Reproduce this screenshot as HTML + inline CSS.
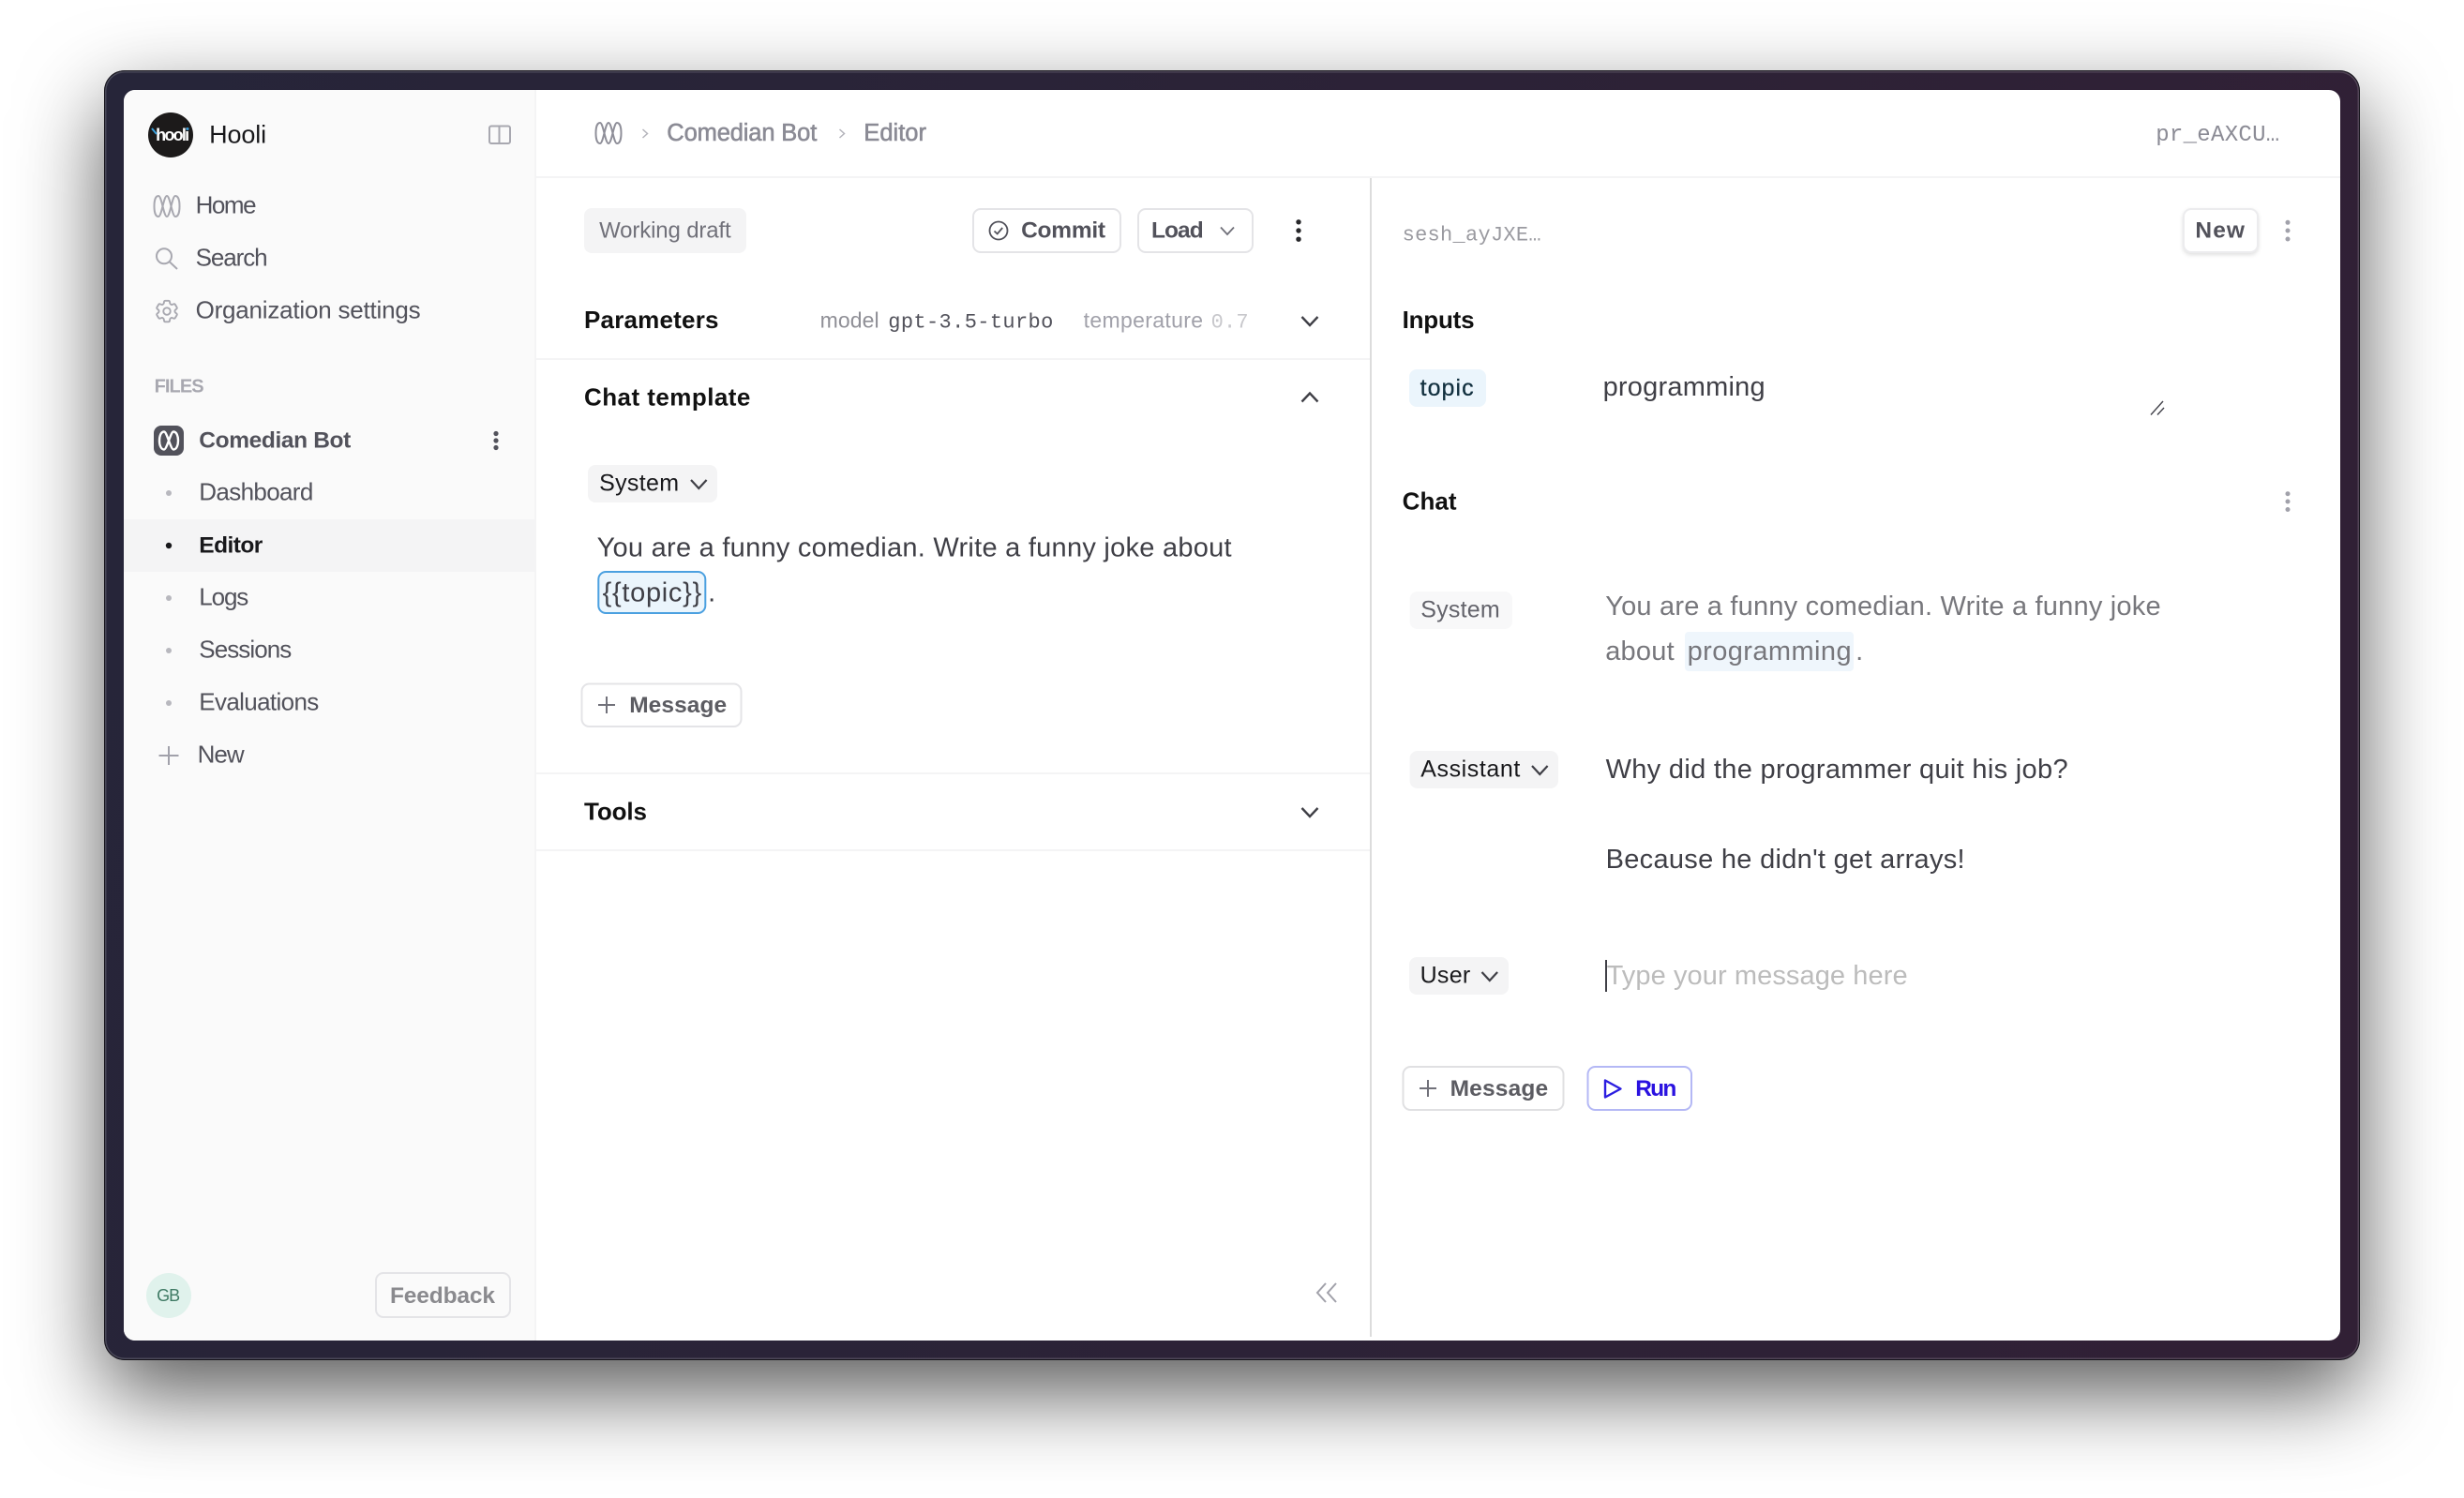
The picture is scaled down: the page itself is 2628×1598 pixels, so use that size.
<!DOCTYPE html>
<html lang="en">
<head>
<meta charset="utf-8">
<title>Hooli - Comedian Bot Editor</title>
<style>
html,body{margin:0;padding:0;background:#fff;width:2628px;height:1598px;overflow:hidden}
#win{position:absolute;left:111px;top:75px;width:2406px;height:1376px;border-radius:22px;box-sizing:border-box;
background:linear-gradient(100deg,#262539,#312035);
box-shadow:0 35px 90px 0 rgba(0,0,0,.65),inset 0 0 0 1px #14121a,inset 0 0 0 2.5px rgba(255,255,255,.16)}
#inner{position:absolute;left:132px;top:96px;width:2364px;height:1334px;border-radius:12px;background:#fff;overflow:hidden}
#side{position:absolute;left:0;top:0;width:438px;height:1334px;background:#fafafa;border-right:2px solid #f4f4f5}
#active{position:absolute;left:0;top:458px;width:438px;height:56px;background:#f4f4f5}
svg{position:absolute;left:0;top:0}
text{font-family:"Liberation Sans",sans-serif;font-size:26px;transform:translateX(-.4px)}
.mono{font-family:"Liberation Mono",monospace}
.b{font-weight:700;font-size:24.5px}
</style>
</head>
<body>
<div id="win"></div>
<div id="inner"><div id="side"></div><div id="active"></div></div>
<svg width="2628" height="1598" viewBox="0 0 2628 1598" xmlns="http://www.w3.org/2000/svg">
<!-- dividers -->
<g fill="#f4f4f5">
<rect x="572" y="188" width="1924" height="2"/>
<rect x="572" y="382" width="889" height="2"/>
<rect x="572" y="824" width="889" height="2"/>
<rect x="572" y="906" width="889" height="2"/>
</g>
<rect x="1461" y="190" width="2" height="1236" fill="#dcdcdc"/>

<!-- sidebar header -->
<circle cx="182" cy="144" r="24" fill="#1c1a1a"/>
<text class="b" x="166.5" y="150" fill="#fff" textLength="36" style="font-size:18px">hooli</text>
<path d="M162 137l5 6" stroke="#3aa0dc" stroke-width="2" fill="none"/>
<circle cx="200" cy="137.5" r="1.5" fill="#3aa0dc"/>
<text x="223.5" y="152.5" fill="#18181b" textLength="61" style="font-size:27px">Hooli</text>
<g fill="none" stroke="#a8a8b0" stroke-width="2">
<rect x="522" y="134.5" width="22" height="18.5" rx="2"/>
<path d="M532.5 134.5v18.5"/>
</g>

<!-- sidebar nav -->
<g fill="none" stroke="#a8a8b0" stroke-width="2">
<path d="M169 209C165.5 209 164.5 215 164.5 220S165.5 231 169 231C172.5 231 174.5 209 178 209C181.5 209 183.5 231 187 231C190.5 231 191.5 225 191.5 220S190.5 209 187 209C183.5 209 181.5 231 178 231C174.5 231 172.5 209 169 209Z"/>
<circle cx="175" cy="273.3" r="8"/>
<path d="M181 279.5l8 7.5"/>
<g transform="translate(163 317) scale(1.25)" stroke-width="1.5">
<path d="M9.594 3.94c.09-.542.56-.94 1.11-.94h2.593c.55 0 1.02.398 1.11.94l.213 1.281c.063.374.313.686.645.87.074.04.147.083.22.127.325.196.72.257 1.075.124l1.217-.456a1.125 1.125 0 011.37.49l1.296 2.247a1.125 1.125 0 01-.26 1.431l-1.003.827c-.293.241-.438.613-.43.992a7.723 7.723 0 010 .255c-.008.378.137.75.43.991l1.004.827c.424.35.534.955.26 1.43l-1.298 2.247a1.125 1.125 0 01-1.369.491l-1.217-.456c-.355-.133-.75-.072-1.076.124a6.47 6.47 0 01-.22.128c-.331.183-.581.495-.644.869l-.213 1.281c-.09.543-.56.94-1.11.94h-2.594c-.55 0-1.019-.398-1.11-.94l-.213-1.281c-.062-.374-.312-.686-.644-.87a6.52 6.52 0 01-.22-.127c-.325-.196-.72-.257-1.076-.124l-1.217.456a1.125 1.125 0 01-1.369-.49l-1.297-2.247a1.125 1.125 0 01.26-1.431l1.004-.827c.292-.24.437-.613.43-.991a6.932 6.932 0 010-.255c.007-.38-.138-.751-.43-.992l-1.004-.827a1.125 1.125 0 01-.26-1.43l1.297-2.247a1.125 1.125 0 011.37-.491l1.216.456c.356.133.751.072 1.076-.124.072-.044.146-.086.22-.128.332-.183.582-.495.644-.869l.214-1.28z"/>
<circle cx="12" cy="12" r="3"/>
</g>
</g>
<g fill="#52525b">
<text x="209" y="227.5" textLength="65">Home</text>
<text x="209" y="283.5" textLength="77">Search</text>
<text x="209" y="339.5" textLength="240">Organization settings</text>
<text x="212.7" y="533.7" textLength="122">Dashboard</text>
<text x="212.7" y="645.7" textLength="53">Logs</text>
<text x="212.7" y="701.7" textLength="99">Sessions</text>
<text x="212.7" y="757.7" textLength="128">Evaluations</text>
<text x="211" y="813.7" textLength="50">New</text>
</g>
<text class="b" x="165" y="418.7" fill="#a8a8b0" textLength="53" style="font-size:20px">FILES</text>

<rect x="164" y="454" width="32" height="32" rx="8" fill="#52525b"/>
<path d="M175 460.5C171.5 460.5 170 465.5 170 470S171.5 479.5 175 479.5C178 479.5 182 460.5 185 460.5C188.5 460.5 190 465.5 190 470S188.5 479.5 185 479.5C182 479.5 178 460.5 175 460.5Z" fill="none" stroke="#fff" stroke-width="2.4"/>
<text class="b" x="212.7" y="477.7" fill="#52525b" textLength="162">Comedian Bot</text>
<g fill="#52525b"><circle cx="529" cy="462.5" r="2.6"/><circle cx="529" cy="470" r="2.6"/><circle cx="529" cy="477.5" r="2.6"/></g>
<g fill="#b8b8be"><circle cx="180" cy="526" r="3"/><circle cx="180" cy="638" r="3"/><circle cx="180" cy="694" r="3"/><circle cx="180" cy="750" r="3"/></g>
<circle cx="180" cy="582" r="3.2" fill="#18181b"/>
<text class="b" x="212.7" y="589.7" fill="#18181b" textLength="68">Editor</text>
<path d="M169.5 806h21M180 796v20" stroke="#a1a1aa" stroke-width="2" fill="none"/>

<!-- sidebar footer -->
<circle cx="180" cy="1382" r="24" fill="#e0f2ec"/>
<text x="167.5" y="1388" fill="#3f7a64" textLength="25" style="font-size:18px">GB</text>
<rect x="401" y="1358" width="143" height="47" rx="8" fill="#fafafa" stroke="#e4e4e7" stroke-width="2"/>
<text class="b" x="416.4" y="1390" fill="#8a8a8e" textLength="112">Feedback</text>

<!-- breadcrumb -->
<path d="M640 131C636.5 131 635.5 137 635.5 142S636.5 153 640 153C643.5 153 645.5 131 649 131C652.5 131 654.5 153 658 153C661.5 153 662.5 147 662.5 142S661.5 131 658 131C654.5 131 652.5 153 649 153C645.5 153 643.5 131 640 131Z" fill="none" stroke="#8f8f99" stroke-width="2"/>
<g fill="none" stroke="#b4b4bb" stroke-width="1.5">
<path d="M685.5 138l5 4.5-5 4.5"/>
<path d="M895.5 138l5 4.5-5 4.5"/>
</g>
<g fill="#8b8b95" stroke="#8b8b95" stroke-width=".6" style="font-size:25px">
<text x="711.7" y="150" textLength="160" style="font-size:25.5px">Comedian Bot</text>
<text x="921.7" y="150" textLength="66.7" style="font-size:25.5px">Editor</text>
</g>
<text class="mono" x="2299.6" y="150" fill="#8b8b95" textLength="132" style="font-size:24px">pr_eAXCU…</text>

<!-- left panel toolbar -->
<rect x="623" y="222" width="173" height="48" rx="8" fill="#f4f4f5"/>
<text x="639.5" y="253.3" fill="#71717a" textLength="140.6" style="font-size:24px">Working draft</text>
<rect x="1038" y="223" width="157" height="46" rx="8" fill="#fff" stroke="#e4e4e7" stroke-width="2"/>
<g fill="none" stroke="#52525b" stroke-width="1.8">
<circle cx="1065" cy="246" r="9.5"/>
<path d="M1060.5 246.5l3.2 3 5.5-6.5"/>
</g>
<text class="b" x="1089.5" y="253.5" fill="#52525b" textLength="90">Commit</text>
<rect x="1214" y="223" width="122" height="46" rx="8" fill="#fff" stroke="#e4e4e7" stroke-width="2"/>
<text class="b" x="1228.4" y="253.5" fill="#52525b" textLength="55.7">Load</text>
<path d="M1302 242.5l7 7.5 7-7.5" fill="none" stroke="#71717a" stroke-width="1.8"/>
<g fill="#27272a"><circle cx="1385" cy="236.8" r="2.7"/><circle cx="1385" cy="246" r="2.7"/><circle cx="1385" cy="255.2" r="2.7"/></g>

<!-- parameters -->
<g fill="#111" font-weight="700">
<text x="623.4" y="350" textLength="143.5" style="font-size:26px">Parameters</text>
<text x="623.4" y="432.7" textLength="177.4" style="font-size:26px">Chat template</text>
<text x="623.4" y="874.3" textLength="67" style="font-size:26px">Tools</text>
</g>
<text x="875" y="349.3" fill="#8f8f96" textLength="63" style="font-size:23px">model</text>
<text class="mono" x="947.7" y="349.3" fill="#52525b" textLength="176" style="font-size:22px">gpt-3.5-turbo</text>
<text x="1156" y="349.3" fill="#a1a1aa" textLength="127.5" style="font-size:23px">temperature</text>
<text class="mono" x="1292" y="349.3" fill="#c8c8cc" textLength="40" style="font-size:22px">0.7</text>
<g fill="none" stroke="#3f3f46" stroke-width="2.4">
<path d="M1388.5 338l8.5 9 8.5-9"/>
<path d="M1388.5 428.5l8.5-9 8.5 9"/>
<path d="M1388.5 862l8.5 9 8.5-9"/>
</g>

<!-- chat template -->
<rect x="627" y="496" width="138" height="40" rx="8" fill="#f4f4f5"/>
<text x="639.5" y="523.3" fill="#18181b" textLength="85" style="font-size:25px">System</text>
<path d="M737 512l8.3 9 8.3-9" fill="none" stroke="#3f3f46" stroke-width="2.2"/>
<text x="637" y="593.3" fill="#3f3f46" textLength="677" style="font-size:29px">You are a funny comedian. Write a funny joke about</text>
<rect x="638.3" y="610" width="114" height="44" rx="8" fill="#ebf5fc" stroke="#4ba0e0" stroke-width="2"/>
<text x="643" y="641.7" fill="#3f3f46" textLength="105.6" style="font-size:29px">{{topic}}</text>
<text x="755.5" y="641.7" fill="#3f3f46" style="font-size:29px">.</text>
<rect x="620.5" y="729.5" width="170" height="45.5" rx="8" fill="#fff" stroke="#e4e4e7" stroke-width="2"/>
<path d="M638 752h18M647 743v18" stroke="#71717a" stroke-width="2" fill="none"/>
<text class="b" x="671.6" y="760" fill="#5c5c62" textLength="104">Message</text>

<!-- collapse -->
<path d="M1414 1369l-9 10 9 10M1425 1369l-9 10 9 10" fill="none" stroke="#a1a1aa" stroke-width="2"/>

<!-- right panel -->
<text class="mono" x="1496" y="256.7" fill="#9a9aa0" textLength="148" style="font-size:22px">sesh_ayJXE…</text>
<rect x="2329" y="223" width="79" height="46" rx="8" fill="#fff" stroke="#ececee" stroke-width="2" style="filter:drop-shadow(0 2px 2px rgba(0,0,0,.12))"/>
<text class="b" x="2341.8" y="253.3" fill="#52525b" textLength="52.6">New</text>
<g fill="#a1a1aa">
<circle cx="2440" cy="237.3" r="2.5"/><circle cx="2440" cy="246" r="2.5"/><circle cx="2440" cy="255" r="2.5"/>
<circle cx="2440" cy="526.7" r="2.5"/><circle cx="2440" cy="535" r="2.5"/><circle cx="2440" cy="543.5" r="2.5"/>
</g>
<g fill="#111" font-weight="700">
<text x="1496" y="350" textLength="77" style="font-size:26px">Inputs</text>
<text x="1496" y="543.3" textLength="58" style="font-size:26px">Chat</text>
</g>
<rect x="1503" y="394" width="82" height="40" rx="8" fill="#ebf5fc"/>
<text x="1515" y="422" fill="#12303f" stroke="#12303f" stroke-width=".3" textLength="57" style="font-size:25px">topic</text>
<text x="1710" y="422" fill="#3f3f46" textLength="173" style="font-size:29px">programming</text>
<path d="M2294 442.5L2307 428M2301 442.5l7-7.5" fill="none" stroke="#44444c" stroke-width="1.4"/>

<rect x="1503.6" y="631" width="109.4" height="40" rx="8" fill="#f8f8f9"/>
<text x="1515.7" y="658.3" fill="#63636b" textLength="84.4" style="font-size:25px">System</text>
<text x="1712.6" y="656" fill="#77777c" textLength="592.4" style="font-size:29px">You are a funny comedian. Write a funny joke</text>
<text x="1712.6" y="704" fill="#77777c" textLength="73.5" style="font-size:29px">about</text>
<rect x="1797" y="674" width="180" height="42" rx="4" fill="#eff6fc"/>
<text x="1800" y="704" fill="#77777c" textLength="175" style="font-size:29px">programming</text>
<text x="1979.5" y="704" fill="#77777c" style="font-size:29px">.</text>

<rect x="1503.6" y="801" width="158.4" height="40" rx="8" fill="#f4f4f5"/>
<text x="1515.7" y="828.3" fill="#18181b" textLength="106" style="font-size:25px">Assistant</text>
<path d="M1634 817l8.3 9 8.3-9" fill="none" stroke="#3f3f46" stroke-width="2.2"/>
<text x="1713" y="830" fill="#3f3f46" textLength="493" style="font-size:29px">Why did the programmer quit his job?</text>
<text x="1713" y="926" fill="#3f3f46" textLength="383" style="font-size:29px">Because he didn't get arrays!</text>

<rect x="1503" y="1021" width="106" height="40" rx="8" fill="#f4f4f5"/>
<text x="1515" y="1048.3" fill="#18181b" textLength="53.6" style="font-size:25px">User</text>
<path d="M1580.5 1037l8.3 9 8.3-9" fill="none" stroke="#3f3f46" stroke-width="2.2"/>
<rect x="1712" y="1024" width="2" height="34" fill="#3f3f46"/>
<text x="1714" y="1050" fill="#bcbcbc" textLength="321" style="font-size:29px">Type your message here</text>

<rect x="1496.5" y="1138" width="171" height="46" rx="8" fill="#fff" stroke="#e0e0e2" stroke-width="2"/>
<path d="M1514 1161h18M1523 1152v18" stroke="#71717a" stroke-width="2" fill="none"/>
<text class="b" x="1547" y="1169" fill="#5c5c62" textLength="104.6">Message</text>
<rect x="1693.5" y="1138" width="110.5" height="46" rx="8" fill="#fff" stroke="#b4b8f5" stroke-width="2"/>
<path d="M1712 1152.5v18l16.5-9z" fill="none" stroke="#2b1de0" stroke-width="2.4" stroke-linejoin="round"/>
<text class="b" x="1744.7" y="1169" fill="#2a12e0" textLength="44">Run</text>
</svg>
</body>
</html>
